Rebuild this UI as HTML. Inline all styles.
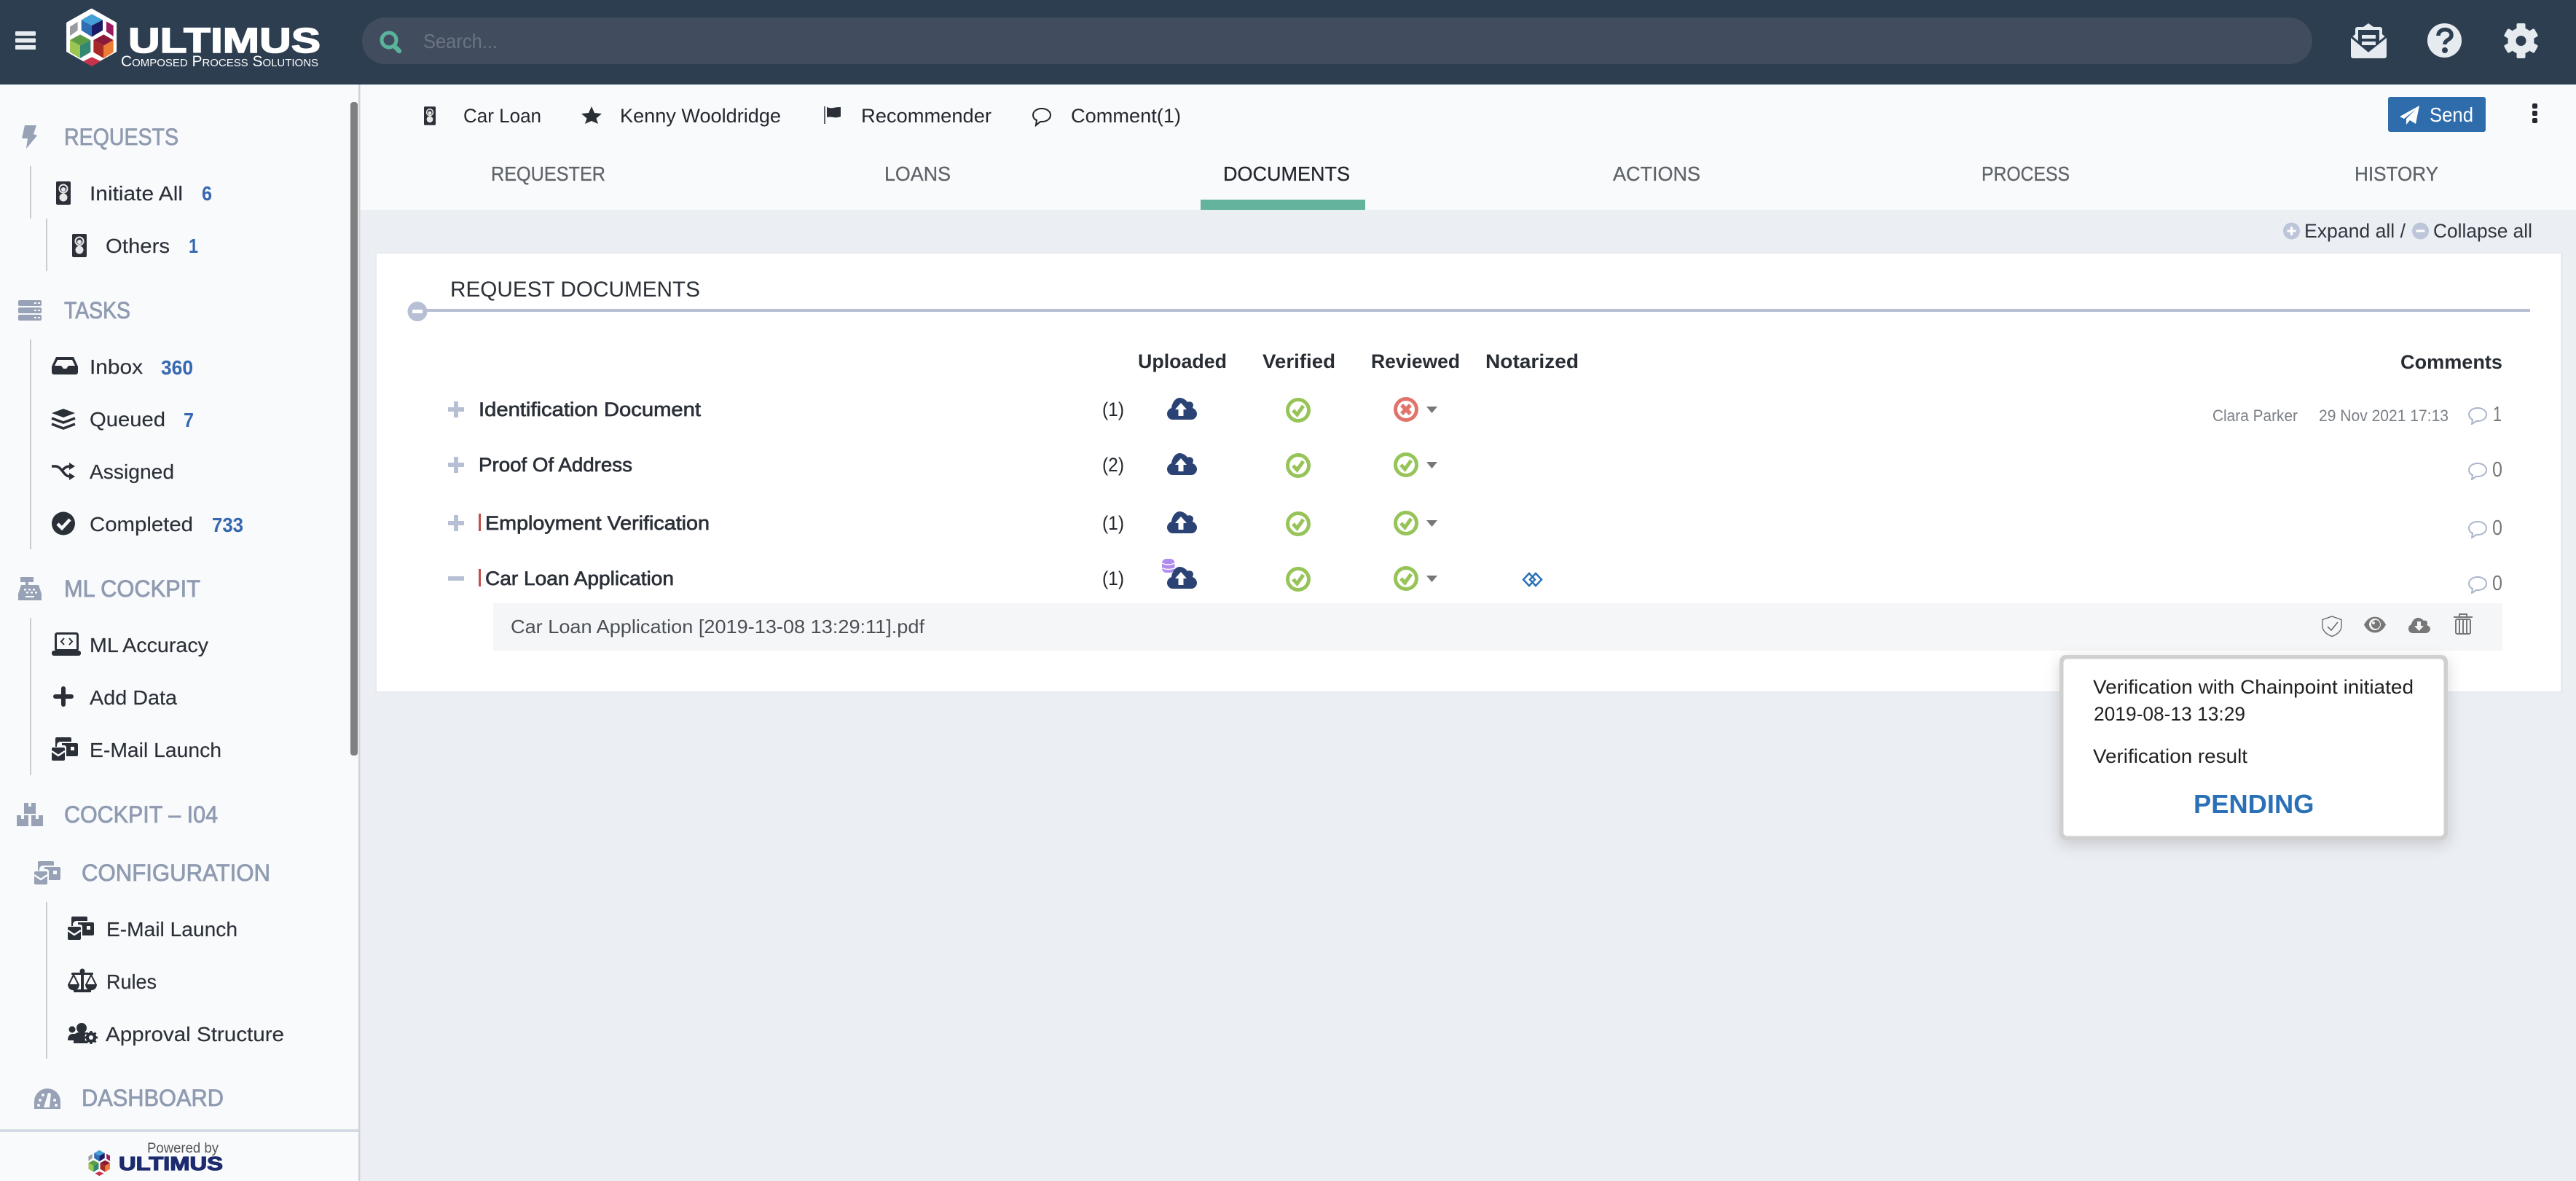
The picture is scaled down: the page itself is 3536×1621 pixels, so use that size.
<!DOCTYPE html>
<html><head><meta charset="utf-8"><title>Ultimus</title>
<style>
html,body{margin:0;padding:0;background:#ebeef3;width:3536px;height:1621px;overflow:hidden}
svg{display:block;font-family:"Liberation Sans",sans-serif}
.t{font-size:28px;fill:#2b3038;stroke:#2b3038;stroke-width:.15}
.h{font-size:32px;fill:#8f9bb1;stroke:#8f9bb1;stroke-width:.8}
.n{font-size:28px;font-weight:bold;fill:#3568b0}
.b{font-size:27px;fill:#24282e}
.tab{font-size:28px;fill:#5f6469;stroke:#5f6469;stroke-width:.3}
.s{font-size:27px;fill:#2b3038;stroke:#2b3038;stroke-width:.7}
.th{font-size:27px;font-weight:bold;fill:#282d33}
.c{font-size:27px;fill:#2f3640}
.g{font-size:22px;fill:#7a7f85}
.z{font-size:29px;fill:#777}
.p{font-size:27px;fill:#222}
</style></head><body>
<svg width="3536" height="1621" viewBox="0 0 3536 1621" xmlns="http://www.w3.org/2000/svg">
<defs>
<symbol id="tl" viewBox="0 0 20 32"><rect width="20" height="32" rx="2" fill="#2b3038"/><circle cx="10" cy="10" r="5.5" fill="none" stroke="#e8e8e8" stroke-width="2"/><circle cx="10" cy="22" r="5.5" fill="#e8e8e8"/><circle cx="10" cy="11" r="3" fill="#e8e8e8"/></symbol>
<symbol id="mail" viewBox="0 0 36 32"><path d="M7 0H25a2 2 0 0 1 2 2V6H12a5 5 0 0 0-5 5v2H5V2a2 2 0 0 1 2-2zM14 8H34a2 2 0 0 1 2 2V24a2 2 0 0 1-2 2H20V14a3 3 0 0 0-3-3H14z" fill="currentColor"/><path d="M2 14H16a2 2 0 0 1 2 2V30a2 2 0 0 1-2 2H2a2 2 0 0 1-2-2V16a2 2 0 0 1 2-2z" fill="currentColor"/><path d="M0 19L9 25L18 19" fill="none" stroke="#f9fafc" stroke-width="2.5"/><rect x="26" y="13" width="5" height="5" fill="#f9fafc"/></symbol>
<symbol id="up" viewBox="0 0 41 30"><path d="M8 30C3 30 0 26 0 22c0-4 3-7 6-8C7 6 12 0 17 0c5 0 9 3 11 6 3-2 8 0 8 4 0 2-1 3-1 4 3 1 6 4 6 8 0 4-3 8-8 8z" fill="#2b4374"/><path d="M19 7L27 16H22.5V25H15.5V16H11z" fill="#fff"/></symbol>
<symbol id="ok" viewBox="0 0 34 34"><circle cx="17" cy="17" r="14.5" fill="none" stroke="#97c458" stroke-width="5"/><path d="M10 17L15.5 23L24 11" fill="none" stroke="#97c458" stroke-width="5"/></symbol>
<symbol id="cm" viewBox="0 0 26 24"><path d="M13 1C6 1 1 5 1 10c0 3 2 6 5 7l-1 6 6-4h2c7 0 12-4 12-9S20 1 13 1z" fill="none" stroke="#aab4cc" stroke-width="2"/></symbol>
<g id="cubes">
<path d="M123 28L168 52 123 75 80 52z" fill="#44a0d8"/><path d="M80 52L123 75V122L80 95z" fill="#2f6eb5"/><path d="M123 75L168 52V95L123 122z" fill="#1a1a66"/>
<path d="M75 112L118 135 75 158 33 135z" fill="#5c9c46"/><path d="M33 135L75 158V210L33 185z" fill="#9bc653"/><path d="M75 158L118 135V185L75 210z" fill="#338872"/>
<path d="M172 112L212 135 172 158 130 135z" fill="#8a1a38"/><path d="M130 135L172 158V210L130 185z" fill="#a82a25"/><path d="M172 158L212 135V185L172 210z" fill="#ed7d36"/>
<path d="M33 80L65 60V95L33 118z" fill="#9a9ca0"/><path d="M183 58L212 75V120L183 100z" fill="#9c1a60"/><path d="M123 205L160 222 123 243 88 222z" fill="#c8324a"/>
</g>
</defs>

<!-- base -->
<rect width="3536" height="1621" fill="#ebeef3"/>
<rect x="494" y="116" width="3042" height="172" fill="#f9fafc"/>
<rect x="0" y="116" width="492" height="1505" fill="#f9fafc"/>
<rect x="492" y="116" width="2.5" height="1505" fill="#d0d3d8"/>
<rect x="481" y="140" width="10" height="897" rx="4" fill="#7f8080"/>

<!-- top bar -->
<rect width="3536" height="116" fill="#2d3e50"/>
<g fill="#e6ebf0"><rect x="21" y="43" width="28" height="6" rx="1"/><rect x="21" y="52.5" width="28" height="6" rx="1"/><rect x="21" y="62" width="28" height="6" rx="1"/></g>
<g transform="translate(85 10) scale(.3333)">
<path d="M122 4L232 66V194L122 256 12 194V66z" fill="#fff" stroke="#fff" stroke-width="10" stroke-linejoin="round" transform="translate(12 6) scale(.9)"/>
<use href="#cubes"/>
</g>
<text x="176" y="72" font-size="48" font-weight="bold" fill="#fff" stroke="#fff" stroke-width="1.5" textLength="264" lengthAdjust="spacingAndGlyphs">ULTIMUS</text>
<text x="166" y="91" font-size="21" fill="#fff" style="font-variant:small-caps" textLength="271" lengthAdjust="spacingAndGlyphs">Composed Process Solutions</text>
<rect x="497" y="24" width="2677" height="64" rx="32" fill="#424c5f"/>
<circle cx="534" cy="55" r="10" fill="none" stroke="#5cb39c" stroke-width="5"/><path d="M541 63L548 70" stroke="#5cb39c" stroke-width="6.5" stroke-linecap="round"/>
<text x="581" y="66" font-size="28" fill="#6b7380" textLength="102" lengthAdjust="spacingAndGlyphs">Search...</text>
<!-- mail open -->
<path d="M3227 52L3233 47V40a3 3 0 0 1 3-3h8l7-5 7 5h9a3 3 0 0 1 3 3v7l6 5V77a3 3 0 0 1-3 3H3230a3 3 0 0 1-3-3z" fill="#e6ebef"/>
<path d="M3237 41H3266V60L3251 71 3237 60z" fill="#2d3e50"/>
<path d="M3227 50L3251 70 3276 50" fill="none" stroke="#2d3e50" stroke-width="3"/>
<rect x="3242" y="48" width="19" height="5" fill="#e6ebef"/><rect x="3242" y="57" width="19" height="5" fill="#e6ebef"/>
<!-- help -->
<circle cx="3355.5" cy="55.5" r="23.5" fill="#e6ebef"/>
<path d="M3347 49c0-11 18-11 18-1 0 7-9 6-9 13" fill="none" stroke="#2d3e50" stroke-width="5.5"/><circle cx="3356" cy="69" r="4" fill="#2d3e50"/>
<!-- gear -->
<g transform="translate(3460.5 56)" fill="#e6ebef"><circle r="18"/>
<rect x="-6" y="-24" width="12" height="10" rx="2"/><rect x="-6" y="-24" width="12" height="10" rx="2" transform="rotate(60)"/><rect x="-6" y="-24" width="12" height="10" rx="2" transform="rotate(120)"/><rect x="-6" y="-24" width="12" height="10" rx="2" transform="rotate(180)"/><rect x="-6" y="-24" width="12" height="10" rx="2" transform="rotate(240)"/><rect x="-6" y="-24" width="12" height="10" rx="2" transform="rotate(300)"/>
<circle r="7" fill="#2d3e50"/></g>

<!-- sidebar -->
<path d="M34 172H50L46 184 51 186 36 204 38 190H30z" fill="#97a2b6"/>
<text class="h" x="88" y="199" textLength="157" lengthAdjust="spacingAndGlyphs">REQUESTS</text>
<rect x="41" y="228" width="2" height="72" fill="#ccc"/><rect x="63" y="300" width="2" height="72" fill="#ccc"/>
<use href="#tl" x="77" y="249" width="20" height="32"/>
<text class="t" x="123" y="275" textLength="128" lengthAdjust="spacingAndGlyphs">Initiate All</text>
<text class="n" x="277" y="275" textLength="14" lengthAdjust="spacingAndGlyphs">6</text>
<use href="#tl" x="99" y="321" width="20" height="32"/>
<text class="t" x="145" y="347" textLength="88" lengthAdjust="spacingAndGlyphs">Others</text>
<text class="n" x="259" y="347" textLength="13" lengthAdjust="spacingAndGlyphs">1</text>

<g fill="#97a2b6"><rect x="25" y="412" width="32" height="8" rx="2"/><rect x="25" y="422" width="32" height="8" rx="2"/><rect x="25" y="432" width="32" height="8" rx="2"/></g>
<g fill="#f9fafc"><rect x="47" y="415" width="3" height="2"/><rect x="52" y="415" width="3" height="2"/><rect x="47" y="425" width="3" height="2"/><rect x="52" y="425" width="3" height="2"/><rect x="47" y="435" width="3" height="2"/><rect x="52" y="435" width="3" height="2"/></g>
<text class="h" x="88" y="437" textLength="91" lengthAdjust="spacingAndGlyphs">TASKS</text>
<rect x="41" y="466" width="2" height="288" fill="#ccc"/>
<path d="M77 490H101L107 503V511a3 3 0 0 1-3 3H74a3 3 0 0 1-3-3V503z" fill="#2b3038"/><path d="M79 494H99L103 502H94L91 506H87L84 502H75z" fill="#f9fafc"/>
<text class="t" x="123" y="513" textLength="73" lengthAdjust="spacingAndGlyphs">Inbox</text>
<text class="n" x="221" y="514" textLength="44" lengthAdjust="spacingAndGlyphs">360</text>
<path d="M87 561L103 567 87 573 71 567z" fill="#2b3038"/><path d="M71 574L87 580 103 574M71 582L87 588 103 582" fill="none" stroke="#2b3038" stroke-width="3.5"/>
<text class="t" x="123" y="585" textLength="104" lengthAdjust="spacingAndGlyphs">Queued</text>
<text class="n" x="252" y="586" textLength="14" lengthAdjust="spacingAndGlyphs">7</text>
<path d="M71 640h5c9 0 11 14 20 14M86 645c3-3 5-5 10-5" fill="none" stroke="#2b3038" stroke-width="3.5"/><path d="M95 635L103 640 95 645zM95 649L103 654 95 659z" fill="#2b3038"/>
<text class="t" x="123" y="657" textLength="116" lengthAdjust="spacingAndGlyphs">Assigned</text>
<circle cx="87" cy="718.5" r="16" fill="#2b3038"/><path d="M79 719L85 725 96 713" fill="none" stroke="#f9fafc" stroke-width="4.5"/>
<text class="t" x="123" y="729" textLength="142" lengthAdjust="spacingAndGlyphs">Completed</text>
<text class="n" x="291" y="730" textLength="43" lengthAdjust="spacingAndGlyphs">733</text>

<path d="M28 792H46V799H39V803H53L57 815V824H25V815L29 803H35V799H28z" fill="#97a2b6"/>
<g fill="#f9fafc"><rect x="33" y="808" width="3" height="2.5"/><rect x="39" y="808" width="3" height="2.5"/><rect x="45" y="808" width="3" height="2.5"/><rect x="36" y="812" width="3" height="2.5"/><rect x="42" y="812" width="3" height="2.5"/><rect x="48" y="812" width="3" height="2.5"/><rect x="35" y="818" width="12" height="2"/></g>
<text class="h" x="88" y="819" textLength="187" lengthAdjust="spacingAndGlyphs">ML COCKPIT</text>
<rect x="41" y="848" width="2" height="216" fill="#ccc"/>
<rect x="76.5" y="869.5" width="30" height="23" rx="2" fill="none" stroke="#2b3038" stroke-width="3"/><rect x="71" y="893" width="40" height="7" rx="3" fill="#2b3038"/><path d="M88 876L84 880.5 88 885M95 876L99 880.5 95 885" fill="none" stroke="#2b3038" stroke-width="2"/>
<text class="t" x="123" y="895" textLength="163" lengthAdjust="spacingAndGlyphs">ML Accuracy</text>
<path d="M87 945V967M76 956H98" stroke="#2b3038" stroke-width="6" stroke-linecap="round"/>
<text class="t" x="123" y="967" textLength="120" lengthAdjust="spacingAndGlyphs">Add Data</text>
<use href="#mail" x="71" y="1012" width="36" height="32" color="#2b3038"/>
<text class="t" x="123" y="1039" textLength="181" lengthAdjust="spacingAndGlyphs">E-Mail Launch</text>

<g fill="#97a2b6"><rect x="33" y="1102" width="16" height="15"/><rect x="23" y="1119" width="16" height="15"/><rect x="43" y="1119" width="16" height="15"/></g>
<g fill="#f9fafc"><rect x="39" y="1102" width="4" height="5"/><rect x="29" y="1119" width="4" height="5"/><rect x="49" y="1119" width="4" height="5"/></g>
<text class="h" x="88" y="1129" textLength="211" lengthAdjust="spacingAndGlyphs">COCKPIT – I04</text>
<use href="#mail" x="47" y="1182" width="36" height="32" color="#97a2b6"/>
<text class="h" x="112" y="1209" textLength="259" lengthAdjust="spacingAndGlyphs">CONFIGURATION</text>
<rect x="63" y="1238" width="2" height="215" fill="#ccc"/>
<use href="#mail" x="93" y="1258" width="36" height="32" color="#2b3038"/>
<text class="t" x="146" y="1285" textLength="180" lengthAdjust="spacingAndGlyphs">E-Mail Launch</text>
<g fill="#2b3038"><circle cx="113" cy="1333" r="3.5"/><rect x="111" y="1333" width="4" height="26"/><rect x="98" y="1335" width="30" height="3" rx="1"/><rect x="101" y="1358" width="24" height="4" rx="1"/>
<path d="M93 1351H109C109 1362 93 1362 93 1351zM117 1351H133C133 1362 117 1362 117 1351z"/></g>
<path d="M94 1352L101 1338 108 1352M118 1352L125 1338 132 1352" fill="none" stroke="#2b3038" stroke-width="2"/>
<text class="t" x="146" y="1357" textLength="69" lengthAdjust="spacingAndGlyphs">Rules</text>
<g fill="#2b3038"><circle cx="112" cy="1411" r="7"/><path d="M101 1432V1424c0-5 4-7 8-7h6c5 0 8 2 8 7v8z"/><circle cx="99" cy="1413" r="4.5"/><path d="M93 1428c0-6 3-9 7-9h3l-2 9z"/>
<circle cx="125" cy="1424" r="8" stroke="#f9fafc" stroke-width="1.5"/><path d="M125 1415v18M116 1424h18M118.500 1417.500l13 13M131.500 1417.500l-13 13" stroke="#2b3038" stroke-width="3"/></g><circle cx="125" cy="1424" r="3" fill="#f9fafc"/>
<text class="t" x="145" y="1429" textLength="245" lengthAdjust="spacingAndGlyphs">Approval Structure</text>
<path d="M47 1522v-10a18 18 0 0 1 36 0v10z" fill="#97a2b6"/><path d="M60 1520L66 1500 70 1501 68 1520z" fill="#f9fafc"/><g fill="#f9fafc"><circle cx="55" cy="1510" r="2"/><circle cx="59" cy="1503" r="2"/><circle cx="75" cy="1510" r="2"/><circle cx="53" cy="1517" r="2"/><circle cx="77" cy="1517" r="2"/></g>
<text class="h" x="112" y="1518" textLength="195" lengthAdjust="spacingAndGlyphs">DASHBOARD</text>

<rect x="0" y="1550" width="492" height="4" fill="#d5dae5"/>
<text x="202" y="1582" font-size="19" fill="#555" textLength="98" lengthAdjust="spacingAndGlyphs">Powered by</text>
<g transform="translate(116 1574) scale(.165)"><use href="#cubes"/></g>
<text x="163" y="1606" font-size="26" font-weight="bold" fill="#1c2a6e" stroke="#1c2a6e" stroke-width="1.2" textLength="143" lengthAdjust="spacingAndGlyphs">ULTIMUS</text>

<!-- request header -->
<use href="#tl" x="582" y="146" width="16" height="26"/>
<text class="b" x="636" y="168" textLength="107" lengthAdjust="spacingAndGlyphs">Car Loan</text>
<path d="M812 146L816 155 826 156 818.500 162.500 821 170 812 166 803 170 805.500 162.500 798 156 808 155z" fill="#2b3038"/>
<text class="b" x="851" y="168" textLength="221" lengthAdjust="spacingAndGlyphs">Kenny Wooldridge</text>
<path d="M1132 146V170" stroke="#2b3038" stroke-width="1.500"/><path d="M1135 147q5 2 9 1t10-1V160q-5 2-10 1t-9 0z" fill="#2b3038"/>
<text class="b" x="1182" y="168" textLength="179" lengthAdjust="spacingAndGlyphs">Recommender</text>
<path d="M1430 149c-7 0-12 4-12 9 0 3 2 6 5 7l-1 7 6-5h2c7 0 12-4 12-9s-5-9-12-9z" fill="none" stroke="#222" stroke-width="2"/>
<text class="b" x="1470" y="168" fill="#111" textLength="151" lengthAdjust="spacingAndGlyphs">Comment(1)</text>
<rect x="3278" y="133" width="134" height="48" rx="3" fill="#2f6cab"/>
<path d="M3294 160L3321 145 3316 170 3308 165 3303 171V163L3316 150 3300 163z" fill="#fff"/>
<text x="3335" y="167" font-size="28" fill="#fff" textLength="60" lengthAdjust="spacingAndGlyphs">Send</text>
<g fill="#23272e"><rect x="3476" y="142" width="7" height="7" rx="2"/><rect x="3476" y="152" width="7" height="7" rx="2"/><rect x="3476" y="162" width="7" height="7" rx="2"/></g>

<text class="tab" x="674" y="248" textLength="157" lengthAdjust="spacingAndGlyphs">REQUESTER</text>
<text class="tab" x="1214" y="248" textLength="91" lengthAdjust="spacingAndGlyphs">LOANS</text>
<text class="tab" x="1679" y="248" style="fill:#23272e;stroke:#23272e" textLength="174" lengthAdjust="spacingAndGlyphs">DOCUMENTS</text>
<text class="tab" x="2214" y="248" textLength="120" lengthAdjust="spacingAndGlyphs">ACTIONS</text>
<text class="tab" x="2720" y="248" textLength="121" lengthAdjust="spacingAndGlyphs">PROCESS</text>
<text class="tab" x="3232" y="248" textLength="115" lengthAdjust="spacingAndGlyphs">HISTORY</text>
<rect x="1648" y="274" width="226" height="14" fill="#64b39c"/>

<!-- expand -->
<circle cx="3145.500" cy="317" r="11.500" fill="#bcc5d9"/><path d="M3145.500 311V323M3139.500 317H3151.500" stroke="#fff" stroke-width="3"/>
<text class="c" x="3163" y="326" textLength="139" lengthAdjust="spacingAndGlyphs">Expand all /</text>
<circle cx="3322.500" cy="317" r="11.500" fill="#bcc5d9"/><path d="M3316.500 317H3328.500" stroke="#fff" stroke-width="3"/>
<text class="c" x="3340" y="326" textLength="136" lengthAdjust="spacingAndGlyphs">Collapse all</text>

<!-- card -->
<rect x="515" y="346" width="3003" height="605" fill="#e7eaef"/>
<rect x="517" y="348" width="2998" height="601" fill="#fff"/>
<text x="618" y="407" font-size="30" fill="#2b3038" textLength="343" lengthAdjust="spacingAndGlyphs">REQUEST DOCUMENTS</text>
<rect x="580" y="424" width="2893" height="4" fill="#b6bfd3"/>
<circle cx="573" cy="427.500" r="13.500" fill="#b6bfd3"/><rect x="566" y="425" width="14" height="5" fill="#fff"/>

<text class="th" x="1562" y="505" textLength="122" lengthAdjust="spacingAndGlyphs">Uploaded</text>
<text class="th" x="1733" y="505" textLength="100" lengthAdjust="spacingAndGlyphs">Verified</text>
<text class="th" x="1882" y="505" textLength="122" lengthAdjust="spacingAndGlyphs">Reviewed</text>
<text class="th" x="2039" y="505" textLength="128" lengthAdjust="spacingAndGlyphs">Notarized</text>
<text class="th" x="3295" y="506" textLength="140" lengthAdjust="spacingAndGlyphs">Comments</text>

<g fill="#b6bfd3">
<rect x="615" y="559" width="22" height="6"/><rect x="623" y="551" width="6" height="22"/>
<rect x="615" y="635" width="22" height="6"/><rect x="623" y="627" width="6" height="22"/>
<rect x="615" y="715" width="22" height="6"/><rect x="623" y="707" width="6" height="22"/>
<rect x="615" y="791" width="22" height="6"/>
</g>
<rect x="657" y="705" width="3" height="24" fill="#c0504a"/><rect x="657" y="781" width="3" height="24" fill="#c0504a"/>
<text class="s" x="657" y="571" textLength="305" lengthAdjust="spacingAndGlyphs">Identification Document</text>
<text class="s" x="657" y="647" textLength="211" lengthAdjust="spacingAndGlyphs">Proof Of Address</text>
<text class="s" x="666" y="727" textLength="308" lengthAdjust="spacingAndGlyphs">Employment Verification</text>
<text class="s" x="666" y="803" textLength="259" lengthAdjust="spacingAndGlyphs">Car Loan Application</text>
<g>
<text class="b" x="1513" y="571" textLength="30" lengthAdjust="spacingAndGlyphs">(1)</text>
<text class="b" x="1513" y="647" textLength="30" lengthAdjust="spacingAndGlyphs">(2)</text>
<text class="b" x="1513" y="727" textLength="30" lengthAdjust="spacingAndGlyphs">(1)</text>
<text class="b" x="1513" y="803" textLength="30" lengthAdjust="spacingAndGlyphs">(1)</text>
</g>
<use href="#up" x="1602" y="546" width="41" height="30"/>
<use href="#up" x="1602" y="622" width="41" height="30"/>
<use href="#up" x="1602" y="702" width="41" height="30"/>
<rect x="1595" y="767" width="17.500" height="19" rx="6" fill="#b08cf0"/><path d="M1595 773q8.700 4 17.500 0M1595 779.500q8.700 4 17.500 0" fill="none" stroke="#fff" stroke-width="1.500"/>
<use href="#up" x="1602" y="778" width="41" height="30"/>
<use href="#ok" x="1765" y="546" width="34" height="34"/>
<use href="#ok" x="1765" y="622" width="34" height="34"/>
<use href="#ok" x="1765" y="702" width="34" height="34"/>
<use href="#ok" x="1765" y="778" width="34" height="34"/>
<circle cx="1930" cy="562" r="14.500" fill="none" stroke="#e0746a" stroke-width="5"/><path d="M1924 556L1936 568M1936 556L1924 568" stroke="#e0746a" stroke-width="5.500"/>
<use href="#ok" x="1913" y="621" width="34" height="34"/>
<use href="#ok" x="1913" y="701" width="34" height="34"/>
<use href="#ok" x="1913" y="777" width="34" height="34"/>
<g fill="#777"><path d="M1958 558H1973L1965.500 567z"/><path d="M1958 634H1973L1965.500 643z"/><path d="M1958 714H1973L1965.500 723z"/><path d="M1958 790H1973L1965.500 799z"/></g>
<path d="M2091 795.500L2099 787 2107 795.500 2099 804zM2100 795.500L2108 787 2116 795.500 2108 804z" fill="none" stroke="#2a70b7" stroke-width="2.500"/>

<text class="g" x="3037" y="578" textLength="117" lengthAdjust="spacingAndGlyphs">Clara Parker</text>
<text class="g" x="3183" y="578" textLength="178" lengthAdjust="spacingAndGlyphs">29 Nov 2021 17:13</text>
<use href="#cm" x="3388" y="559" width="26" height="24"/><text class="z" x="3422" y="578" textLength="12" lengthAdjust="spacingAndGlyphs">1</text>
<use href="#cm" x="3388" y="635" width="26" height="24"/><text class="z" x="3421" y="654" textLength="14" lengthAdjust="spacingAndGlyphs">0</text>
<use href="#cm" x="3388" y="715" width="26" height="24"/><text class="z" x="3421" y="734" textLength="14" lengthAdjust="spacingAndGlyphs">0</text>
<use href="#cm" x="3388" y="791" width="26" height="24"/><text class="z" x="3421" y="810" textLength="14" lengthAdjust="spacingAndGlyphs">0</text>

<!-- file row -->
<rect x="677" y="828" width="2758" height="65" fill="#f5f6f8"/>
<text x="701" y="869" font-size="26" fill="#4a4f55" textLength="568" lengthAdjust="spacingAndGlyphs">Car Loan Application [2019-13-08 13:29:11].pdf</text>
<path d="M3201 846l13 4.500v9c0 6-5 11-13 14-8-3-13-8-13-14v-9z" fill="none" stroke="#666" stroke-width="1.300"/><path d="M3195 860l5 5 9-11" fill="none" stroke="#666" stroke-width="1.500"/>
<path d="M3245 857.500C3252 843 3268 843 3275 857.500 3268 872 3252 872 3245 857.500z" fill="#777"/><circle cx="3260" cy="857" r="8" fill="#f5f6f8"/><circle cx="3261" cy="857" r="6" fill="#777"/><circle cx="3258" cy="855" r="2" fill="#eee"/>
<path d="M3312 869c-4 0-6-3-6-6s2-5 4-6c1-5 5-9 9-9s6 2 8 4c2-1 5 0 5 3 0 1 0 2-1 3 3 1 5 3 5 5 0 3-3 6-6 6z" fill="#777"/><path d="M3318 853h5v6h4l-6.500 7-6.500-7h4z" fill="#f5f6f8"/>
<g fill="none" stroke="#777" stroke-width="2"><path d="M3368 847H3394M3376 846V843H3386V846"/><rect x="3371" y="850" width="20" height="20" rx="2"/><path d="M3376 851V870M3381 851V870M3386 851V870"/></g>

<!-- popover -->
<rect x="2827" y="899" width="533" height="254" rx="9" fill="#d0d0d0" style="filter:drop-shadow(0 6px 10px rgba(0,0,0,.16))"/>
<rect x="2832.500" y="904.500" width="522" height="243" rx="5" fill="#fff"/>
<text class="p" x="2873" y="952" textLength="440" lengthAdjust="spacingAndGlyphs">Verification with Chainpoint initiated</text>
<text class="p" x="2874" y="989" textLength="208" lengthAdjust="spacingAndGlyphs">2019-08-13 13:29</text>
<text class="p" x="2873" y="1047" textLength="212" lengthAdjust="spacingAndGlyphs">Verification result</text>
<text x="3011" y="1116" font-size="36" font-weight="bold" fill="#2a70b7" textLength="165.500" lengthAdjust="spacingAndGlyphs">PENDING</text>
</svg>
</body></html>
